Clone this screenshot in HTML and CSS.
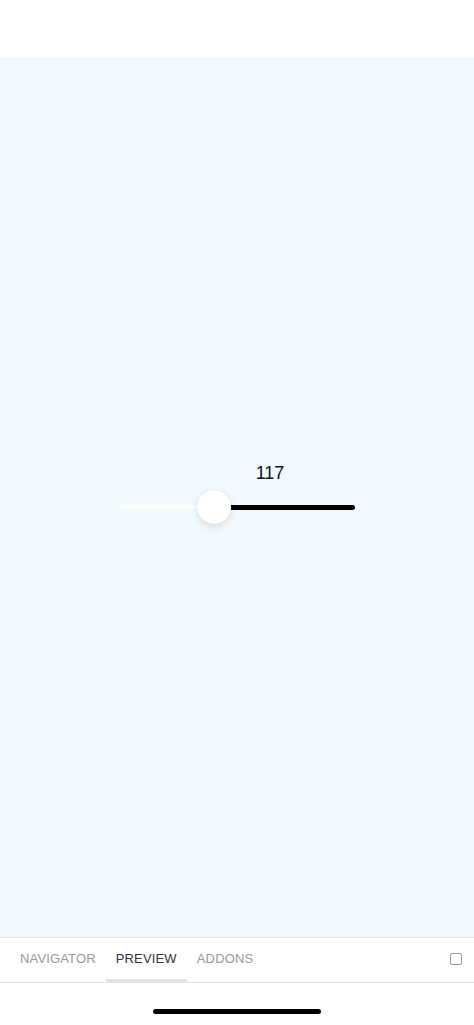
FILE: index.html
```html
<!DOCTYPE html>
<html>
<head>
<meta charset="utf-8">
<link rel="stylesheet" href="styles.css">
</head>
<body>
<div class="screen">
  <div class="status"></div>
  <main class="preview">
    <div class="value">117</div>
    <div class="slider">
      <div class="track-min"></div>
      <div class="track-max"></div>
      <div class="thumb"></div>
    </div>
  </main>
  <nav class="tabbar">
    <div class="tabs">
      <div class="tab">NAVIGATOR</div>
      <div class="tab active">PREVIEW</div>
      <div class="tab">ADDONS</div>
    </div>
    <div class="check"></div>
  </nav>
  <div class="home"><div class="indicator"></div></div>
</div>
</body>
</html>
```

FILE: styles.css
```css
* { box-sizing: border-box; }
html, body { margin: 0; padding: 0; background: #fff; }
body { font-family: "Liberation Sans", Arial, sans-serif; }
.screen { width: 474px; height: 1025px; display: flex; flex-direction: column; overflow: hidden; }
.status { height: 57px; flex: none; background: #fff; }
.preview {
  height: 880px; flex: none; background: #f3faff;
  display: flex; flex-direction: column; align-items: center;
  padding-top: 405px;
}
.value {
  font-size: 18px; line-height: 22px; color: #111;
  margin-left: 66px; height: 22px;
}
.slider {
  margin-top: 6px; width: 235px; height: 34px; position: relative;
  display: flex; align-items: center;
}
.track-min { width: 94px; height: 4px; background: #fff; border-radius: 2px 0 0 2px; }
.track-max { flex: 1; height: 5px; background: #000; border-radius: 3px; }
.thumb {
  position: absolute; left: 77px; top: 0; width: 34px; height: 34px;
  border-radius: 50%; background: #fff;
  box-shadow: 0 3px 8px rgba(0,0,0,0.12), 0 0 1px rgba(0,0,0,0.15);
}
.tabbar {
  height: 46px; flex: none; border-top: 1px solid #e4e4e4; border-bottom: 1px solid #e4e4e4;
  display: flex; align-items: stretch; justify-content: space-between;
  padding: 0 12px 0 10px; background: #fff;
}
.tabs { display: flex; }
.tab {
  padding: 0 10px; display: flex; align-items: center;
  font-size: 13px; color: #999; border-bottom: 3px solid transparent;
  letter-spacing: 0.15px;
}
.tab.active { color: #333; border-bottom-color: #e2e2e2; }
.check {
  align-self: center; margin-bottom: 3px;
  width: 12px; height: 12px; border: 1.5px solid #9a9a9a; border-radius: 2px;
}
.home { flex: 1; display: flex; justify-content: center; padding-top: 26px; }
.indicator { width: 168px; height: 5px; background: #000; border-radius: 3px; }
```
